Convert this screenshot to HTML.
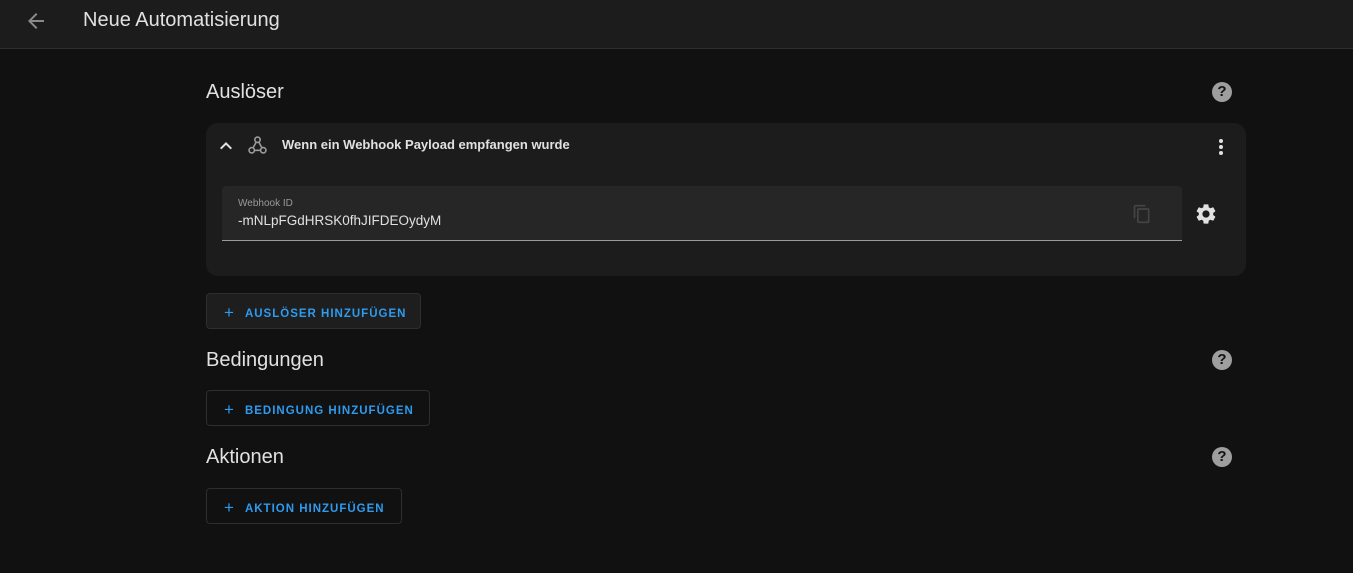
<!DOCTYPE html><html><head><style>
body{margin:0;background:#111111;font-family:"Liberation Sans",sans-serif;width:1353px;height:573px;overflow:hidden;position:relative;color:#e1e1e1}
.hdr{position:absolute;left:0;top:0;width:1353px;height:48px;background:#1c1c1c;border-bottom:1px solid #2f2f2f}
.t{position:absolute;font-size:20px;color:#e1e1e1}
.btn{position:absolute;left:206px;height:36px;border:1px solid #2e2e2e;border-radius:4px;color:#2d9bef;font-size:11.5px;font-weight:bold;letter-spacing:1px;line-height:36px;box-sizing:border-box;padding-left:17px;white-space:nowrap}
.btn span{font-size:17px;font-weight:normal;margin-right:10px;position:relative;top:1px}
.help{position:absolute;left:1212px;width:20px;height:20px;border-radius:50%;background:#9e9e9e;color:#111;font-weight:bold;font-size:15px;text-align:center;line-height:20px}
</style></head><body>
<div class="hdr">
<svg style="position:absolute;left:24px;top:9px" width="24" height="24" viewBox="0 0 24 24"><path d="M20 11H7.83l5.59-5.59L12 4l-8 8 8 8 1.41-1.41L7.83 13H20z" fill="#8a8a8a"/></svg>
<div class="t" style="left:83px;top:9px;font-size:20px">Neue Automatisierung</div>
</div>
<div class="t" style="left:206px;top:81px">Auslöser</div>
<div class="help" style="top:82px">?</div>
<div style="position:absolute;left:206px;top:123px;width:1040px;height:153px;background:#1c1c1c;border-radius:12px"></div>
<svg style="position:absolute;left:214px;top:134px" width="24" height="24" viewBox="0 0 24 24"><path d="M7.41 15.41L12 10.83l4.59 4.58L18 14l-6-6-6 6z" fill="#e1e1e1"/></svg>
<svg style="position:absolute;left:246px;top:134px" width="23" height="23" viewBox="0 0 24 24" fill="none" stroke="#9a9a9a" stroke-width="1.7"><circle cx="12" cy="6" r="2.8"/><circle cx="6" cy="17" r="2.8"/><circle cx="18" cy="17" r="2.8"/><path d="M10.6 8.5L7.4 14.5M8.8 17h6.4M13.4 8.5l3.2 6"/></svg>
<div style="position:absolute;left:282px;top:137px;font-size:13px;font-weight:bold;color:#e1e1e1">Wenn ein Webhook Payload empfangen wurde</div>
<div style="position:absolute;left:1219px;top:139px;width:4px">
<div style="width:4px;height:4px;border-radius:50%;background:#e1e1e1;margin-bottom:2px"></div><div style="width:4px;height:4px;border-radius:50%;background:#e1e1e1;margin-bottom:2px"></div><div style="width:4px;height:4px;border-radius:50%;background:#e1e1e1"></div></div>
<div style="position:absolute;left:222px;top:186px;width:960px;height:54px;background:#262626;border-radius:4px 4px 0 0;border-bottom:1px solid #9a9a9a"></div>
<div style="position:absolute;left:238px;top:198px;font-size:10px;color:#9a9a9a">Webhook ID</div>
<div style="position:absolute;left:238px;top:213px;font-size:13.5px;color:#e1e1e1">-mNLpFGdHRSK0fhJIFDEOydyM</div>
<svg style="position:absolute;left:1132px;top:204px" width="20" height="20" viewBox="0 0 24 24"><path d="M16 1H4c-1.1 0-2 .9-2 2v14h2V3h12V1zm3 4H8c-1.1 0-2 .9-2 2v14c0 1.1.9 2 2 2h11c1.1 0 2-.9 2-2V7c0-1.1-.9-2-2-2zm0 16H8V7h11v14z" fill="#444"/></svg>
<svg style="position:absolute;left:1194px;top:202px" width="24" height="24" viewBox="0 0 24 24"><path d="M19.14 12.94c.04-.3.06-.61.06-.94 0-.32-.02-.64-.07-.94l2.03-1.58a.49.49 0 00.12-.61l-1.92-3.32a.49.49 0 00-.59-.22l-2.39.96c-.5-.38-1.03-.7-1.62-.94l-.36-2.54a.484.484 0 00-.48-.41h-3.840c-.24 0-.43.17-.47.41l-.36 2.54c-.59.24-1.13.57-1.62.94l-2.39-.96c-.22-.08-.47 0-.59.22L2.74 8.87c-.12.21-.08.47.12.61l2.03 1.58c-.05.3-.09.63-.09.94s.02.64.07.94l-2.03 1.58a.49.49 0 00-.12.61l1.92 3.32c.12.22.37.29.59.22l2.39-.96c.5.38 1.03.7 1.62.94l.36 2.54c.05.24.24.41.48.41h3.84c.24 0 .44-.17.47-.41l.36-2.54c.59-.24 1.13-.56 1.62-.94l2.39.96c.22.08.47 0 .59-.22l1.92-3.32c.12-.22.07-.47-.12-.61l-2.01-1.58zM12 15.6c-1.98 0-3.6-1.62-3.6-3.6s1.62-3.6 3.6-3.6 3.6 1.62 3.6 3.6-1.62 3.6-3.6 3.6z" fill="#e1e1e1"/></svg>
<div class="btn" style="top:293px;width:215px;background:#1e1e1e"><span>+</span>AUSLÖSER HINZUFÜGEN</div>
<div class="t" style="left:206px;top:349px">Bedingungen</div>
<div class="help" style="top:350px">?</div>
<div class="btn" style="top:390px;width:224px"><span>+</span>BEDINGUNG HINZUFÜGEN</div>
<div class="t" style="left:206px;top:446px">Aktionen</div>
<div class="help" style="top:447px">?</div>
<div class="btn" style="top:488px;width:196px"><span>+</span>AKTION HINZUFÜGEN</div>
</body></html>
